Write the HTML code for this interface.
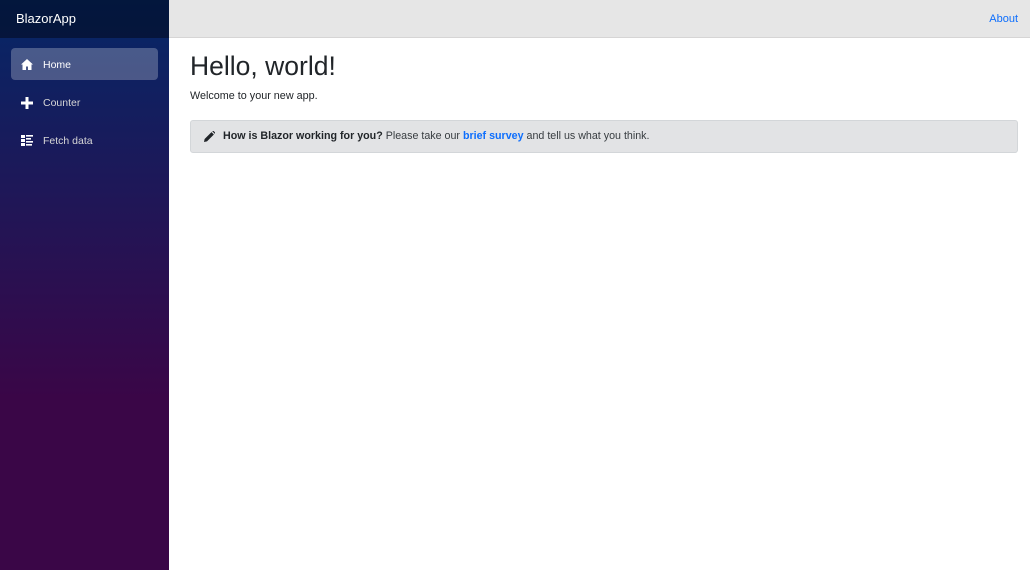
<!DOCTYPE html>
<html><head><style>
*{box-sizing:border-box;margin:0;padding:0}
body{width:1030px;height:570px;overflow:hidden;font-family:"Liberation Sans",sans-serif;position:relative;background:#fff;color:#212529}
.side{position:absolute;left:0;top:0;width:169px;height:570px;background:linear-gradient(180deg,#052767 0%,#3a0647 70%)}
.brand{height:38px;background:rgba(0,0,0,0.4);color:#fff;font-size:13px;line-height:38px;padding-left:16px}
.nav{position:absolute;left:11px;width:147px;height:32px;border-radius:4px;color:#d7d7d7;font-size:10.5px;line-height:34px;padding-left:32px}
.nav.act{background:rgba(255,255,255,0.25);color:#fff}
.nav svg{position:absolute;left:10px;top:11px}
.top{position:absolute;left:169px;top:0;right:0;height:38px;background:#e6e6e6;border-bottom:1px solid #d6d5d5}
.top a{position:absolute;right:12px;top:13px;font-size:11px;text-decoration:none;color:#0d6efd}
h1{position:absolute;left:190px;top:51px;font-size:26.5px;font-weight:400;color:#212529}
.wel{position:absolute;left:190px;top:90px;font-size:10.8px}
.alert{position:absolute;left:190px;top:120px;width:828px;height:33px;background:#e2e3e5;border:1px solid #d3d6d9;border-radius:3px;font-size:10.7px;line-height:31px;padding-left:32px;color:#383d41}
.alert svg{position:absolute;left:13px;top:10px}
.alert a{color:#0d6efd;font-weight:bold;text-decoration:none}
</style></head><body>
<div class="side">
<div class="brand">BlazorApp</div>
<div class="nav act" style="top:48px"><svg width="12" height="11" viewBox="0 0 12 11"><path d="M6 0L0 5.5h1.5V11h3.5V7.5h2V11h3.5V5.5H12z" fill="#fff"/></svg>Home</div>
<div class="nav" style="top:86px"><svg width="12" height="12" viewBox="0 0 12 12"><path d="M4.5 0h3v4.5H12v3H7.5V12h-3V7.5H0v-3h4.5z" fill="#fff"/></svg>Counter</div>
<div class="nav" style="top:124px"><svg width="12" height="11" viewBox="0 0 12 11"><path d="M0 0h4v3H0zM0 4h4v3H0zM0 8h4v3H0zM5 0h7v1.6H5zM5 3h5v1.6H5zM5 6h7v1.6H5zM5 9h6v1.6H5z" fill="#fff"/></svg>Fetch data</div>
</div>
<div class="top"><a>About</a></div>
<h1>Hello, world!</h1>
<div class="wel">Welcome to your new app.</div>
<div class="alert"><svg width="11" height="11" viewBox="0 0 11 11"><path d="M0 11l.6-3L7.5 1.1l2.4 2.4L3 10.4zM8.3.3l.8-.8 2.4 2.4-.8.8z" fill="#212529"/></svg><b style="color:#212529">How is Blazor working for you?</b> Please take our <a>brief survey</a> and tell us what you think.</div>
</body></html>
